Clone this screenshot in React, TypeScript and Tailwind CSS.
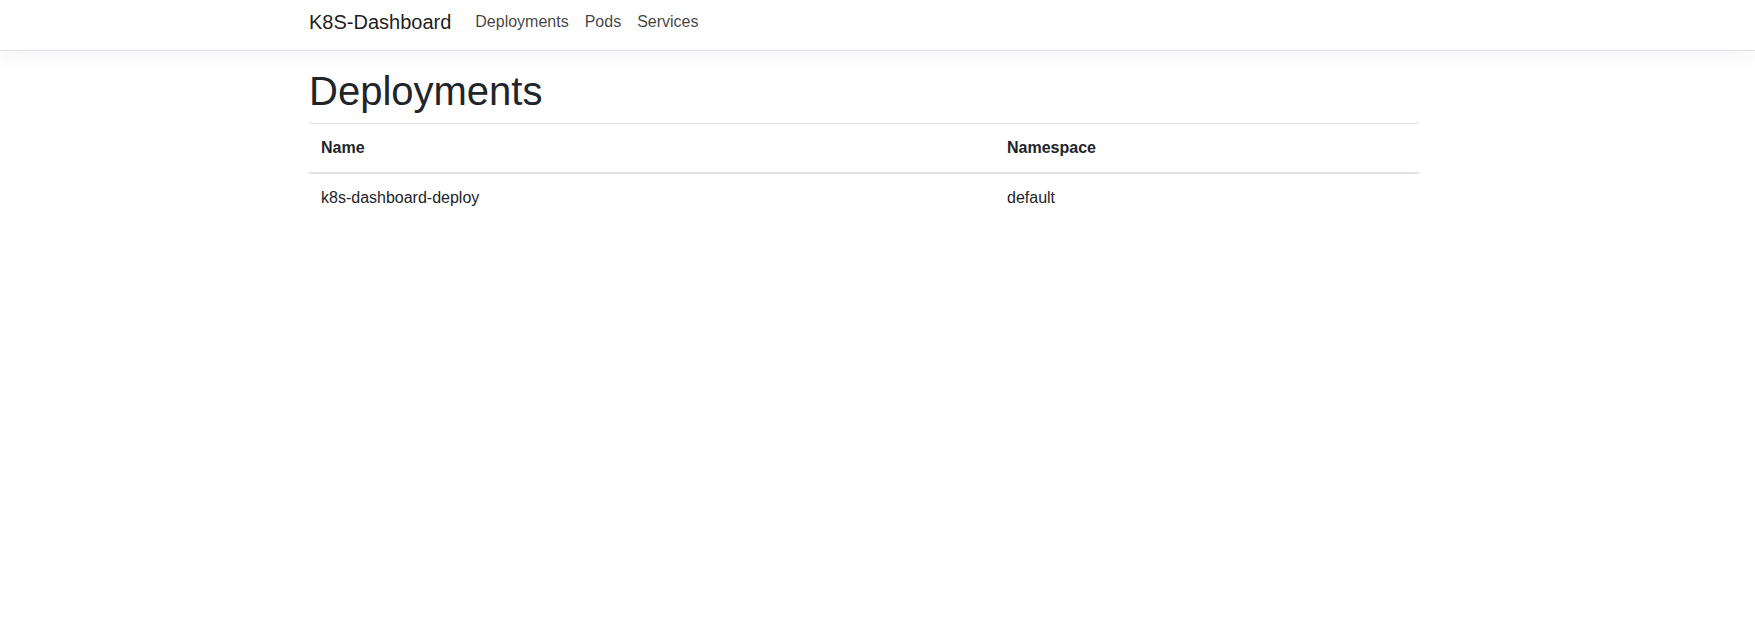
import React from "react";

export default function App() {
  return (
    <div className="min-h-[641px] bg-white font-['Liberation_Sans',Arial,sans-serif] text-[#212529]">
      <nav className="h-[51px] border-b border-[#e0e0e8] bg-white shadow-[0_6px_22px_rgba(0,0,0,0.045)]">
        <div className="ml-[309px] flex h-[44px] w-[1110px] items-center">
          <span className="mr-4 text-[20px] leading-[30px] text-[rgba(0,0,0,0.9)]">K8S-Dashboard</span>
          <div className="flex text-[16px] leading-[24px] text-[rgba(0,0,0,0.75)]">
            <span className="px-2">Deployments</span>
            <span className="px-2">Pods</span>
            <span className="px-2">Services</span>
          </div>
        </div>
      </nav>
      <main className="ml-[309px] w-[1110px]">
        <h1 className="mt-4 mb-2 text-[40px] leading-[48px] font-normal">Deployments</h1>
        <table className="w-full border-collapse text-[16px] leading-[24px]">
          <thead>
            <tr>
              <th className="w-[686px] border-t border-b-2 border-[#dee2e6] p-3 text-left font-bold">Name</th>
              <th className="border-t border-b-2 border-[#dee2e6] p-3 text-left font-bold">Namespace</th>
            </tr>
          </thead>
          <tbody>
            <tr>
              <td className="p-3">k8s-dashboard-deploy</td>
              <td className="p-3">default</td>
            </tr>
          </tbody>
        </table>
      </main>
    </div>
  );
}
